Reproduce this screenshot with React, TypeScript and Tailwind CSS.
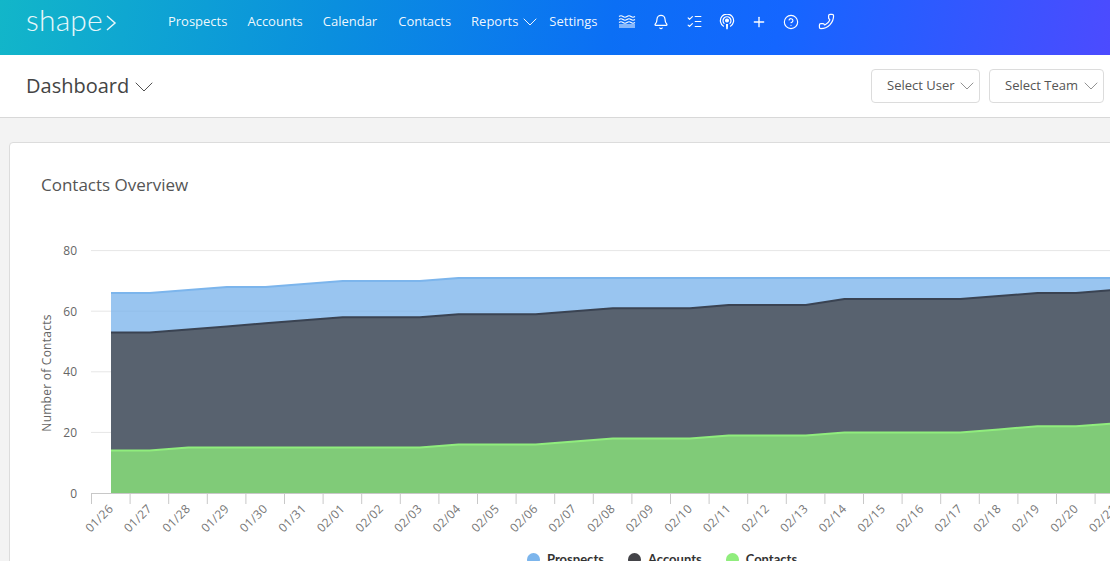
import { Bell, ChevronDown, CircleHelp, ListChecks, Phone, Plus } from "lucide-react";

const dates = [
  "01/26", "01/27", "01/28", "01/29", "01/30", "01/31", "02/01", "02/02", "02/03",
  "02/04", "02/05", "02/06", "02/07", "02/08", "02/09", "02/10", "02/11", "02/12",
  "02/13", "02/14", "02/15", "02/16", "02/17", "02/18", "02/19", "02/20", "02/21",
];
const prospects = [66, 66, 67, 68, 68, 69, 70, 70, 70, 71, 71, 71, 71, 71, 71, 71, 71, 71, 71, 71, 71, 71, 71, 71, 71, 71, 71];
const accounts = [53, 53, 54, 55, 56, 57, 58, 58, 58, 59, 59, 59, 60, 61, 61, 61, 62, 62, 62, 64, 64, 64, 64, 65, 66, 66, 67];
const contacts = [14, 14, 15, 15, 15, 15, 15, 15, 15, 16, 16, 16, 17, 18, 18, 18, 19, 19, 19, 20, 20, 20, 20, 21, 22, 22, 23];

const step = 38.6;
const px = (i: number) => 111 + step * i;
const py = (v: number) => 493 - v * 3.03;
const line = (d: number[]) => d.map((v, i) => `${i ? "L" : "M"}${px(i).toFixed(1)} ${py(v).toFixed(1)}`).join(" ");
const area = (d: number[]) => `${line(d)} L${px(26).toFixed(1)} 493 L111 493 Z`;

function Waves() {
  return (
    <svg width="18" height="13" viewBox="0 0 18 13" fill="none" stroke="currentColor" strokeWidth="1.1">
      <path d="M1 1.5q2-1.4 4 0t4 0 4 0 4 0" />
      <path d="M1 4.5q2-1.4 4 0t4 0 4 0 4 0" />
      <path d="M1 7.5q2-1.4 4 0t4 0 4 0 4 0" />
      <path d="M1 10h16M1 12h16" />
    </svg>
  );
}

function Podcast() {
  return (
    <svg width="16" height="16" viewBox="0 0 16 16" fill="none" stroke="currentColor" strokeWidth="1.2">
      <path d="M4.8 12.4a6.6 6.6 0 1 1 6.4 0" />
      <path d="M5.4 9.8a4 4 0 1 1 5.2 0" />
      <circle cx="8" cy="6.6" r="1.4" fill="currentColor" />
      <path d="M6.9 10h2.2l-.4 5.2H7.3z" fill="currentColor" stroke="none" />
    </svg>
  );
}

function Logo() {
  return (
    <div className="flex items-center text-white/90">
      <span className="font-['Lato',sans-serif] text-[30px] font-light leading-none tracking-[0.2px] relative -top-[3px]">shape</span>
      <svg width="11" height="16" viewBox="0 0 11 16" fill="none" stroke="currentColor" strokeWidth="1.5" className="ml-[3px] mt-[2px]">
        <path d="M1 1l8 7-8 7" />
      </svg>
    </div>
  );
}

function SelectBox({ label, width }: { label: string; width: string }) {
  return (
    <div className={`${width} h-[34px] rounded-[4px] border border-[#dcdcdc] bg-white flex items-center justify-between pl-[15px] text-[13px] text-[#555]`}>
      <span>{label}</span>
      <ChevronDown size={24} strokeWidth={0.8} className="text-[#777]" />
    </div>
  );
}

function LegendItem({ color, label }: { color: string; label: string }) {
  return (
    <div className="flex items-center gap-[7px]">
      <span className={`w-[13px] h-[13px] rounded-full ${color}`} />
      <span className="text-[13px] font-bold text-[#333] font-['Lato',sans-serif]">{label}</span>
    </div>
  );
}

function Chart() {
  return (
    <svg width="1100" height="305" viewBox="10 240 1100 305" className="block font-['Open_Sans',sans-serif]">
      {[80, 60, 40, 20].map((v) => (
        <line key={v} x1="91" x2="1110" y1={py(v)} y2={py(v)} stroke="#e6e6e6" />
      ))}
      <path d={area(prospects)} fill="#7cb5ec" fillOpacity="0.78" />
      <path d={line(prospects)} fill="none" stroke="#7cb5ec" strokeWidth="2" />
      <path d={area(accounts)} fill="#58626f" />
      <path d={line(accounts)} fill="none" stroke="#3a4352" strokeWidth="2" />
      <path d={area(contacts)} fill="#80cb78" />
      <path d={line(contacts)} fill="none" stroke="#90ed7d" strokeWidth="2" />
      <line x1="91" x2="1110" y1="493.5" y2="493.5" stroke="#c8c8c8" />
      {dates.map((d, i) => (
        <g key={d}>
          <line x1={91.5 + step * i} x2={91.5 + step * i} y1="493" y2="504" stroke="#c8c8c8" />
          <text x={114 + step * i} y="509.5" textAnchor="end" fontSize="12" letterSpacing="0.3" fill="#777" transform={`rotate(-45 ${114 + step * i} 509.5)`}>
            {d}
          </text>
        </g>
      ))}
      {[80, 60, 40, 20, 0].map((v) => (
        <text key={v} x="77" y={py(v) + 4.5} textAnchor="end" fontSize="12" fill="#666">
          {v}
        </text>
      ))}
      <text x="51" y="373" textAnchor="middle" fontSize="12" letterSpacing="0.25" fill="#666" transform="rotate(-90 51 373)">
        Number of Contacts
      </text>
    </svg>
  );
}

export default function App() {
  return (
    <div className="w-[1110px] h-[561px] overflow-hidden bg-[#f3f3f3] font-['Open_Sans',sans-serif]">
      <header className="h-[55px] flex items-center pl-[26px] pb-[12px] text-white bg-[linear-gradient(100deg,#12b6c9_0%,#0a8fde_30%,#0b6ff5_55%,#1466ff_70%,#4c4bff_100%)]">
        <Logo />
        <nav className="flex items-center ml-[51px] text-[13px] font-medium text-white/95">
          <a className="mr-[20px]">Prospects</a>
          <a className="mr-[20px]">Accounts</a>
          <a className="mr-[21px]">Calendar</a>
          <a className="mr-[20px]">Contacts</a>
          <a className="flex items-center mr-[7px]">
            Reports
            <ChevronDown size={24} strokeWidth={1} />
          </a>
          <a>Settings</a>
        </nav>
        <div className="flex items-center ml-[20px] gap-[16px]">
          <Waves />
          <Bell size={16} strokeWidth={1.8} className="ml-[1px]" />
          <ListChecks size={17} strokeWidth={1.6} className="ml-[1px]" />
          <Podcast />
          <Plus size={16} strokeWidth={2} />
          <CircleHelp size={16} strokeWidth={1.7} />
          <Phone size={17} strokeWidth={1.7} className="-scale-x-100 ml-[3px]" />
        </div>
      </header>
      <div className="h-[63px] bg-white border-b border-[#d8d8d8] flex items-center justify-between pl-[26px] pr-[6px]">
        <div className="flex items-center text-[20px] text-[#444]">
          <span>Dashboard</span>
          <ChevronDown size={32} strokeWidth={0.7} className="-ml-[1px] mt-[2px]" />
        </div>
        <div className="flex items-center gap-[9px]">
          <SelectBox label="Select User" width="w-[109px]" />
          <SelectBox label="Select Team" width="w-[115px]" />
        </div>
      </div>
      <main className="ml-[9px] mt-[24px] w-[1200px] h-[600px] bg-white border border-[#dcdcdc] rounded-[4px]">
        <h2 className="pl-[31px] pt-[31px] text-[17px] leading-[22px] text-[#555]">Contacts Overview</h2>
        <div className="mt-[44px]">
          <Chart />
        </div>
        <div className="flex items-center gap-[24px] pl-[517px] mt-[5px]">
          <LegendItem color="bg-[#7cb5ec]" label="Prospects" />
          <LegendItem color="bg-[#434348]" label="Accounts" />
          <LegendItem color="bg-[#90ed7d]" label="Contacts" />
        </div>
      </main>
    </div>
  );
}
